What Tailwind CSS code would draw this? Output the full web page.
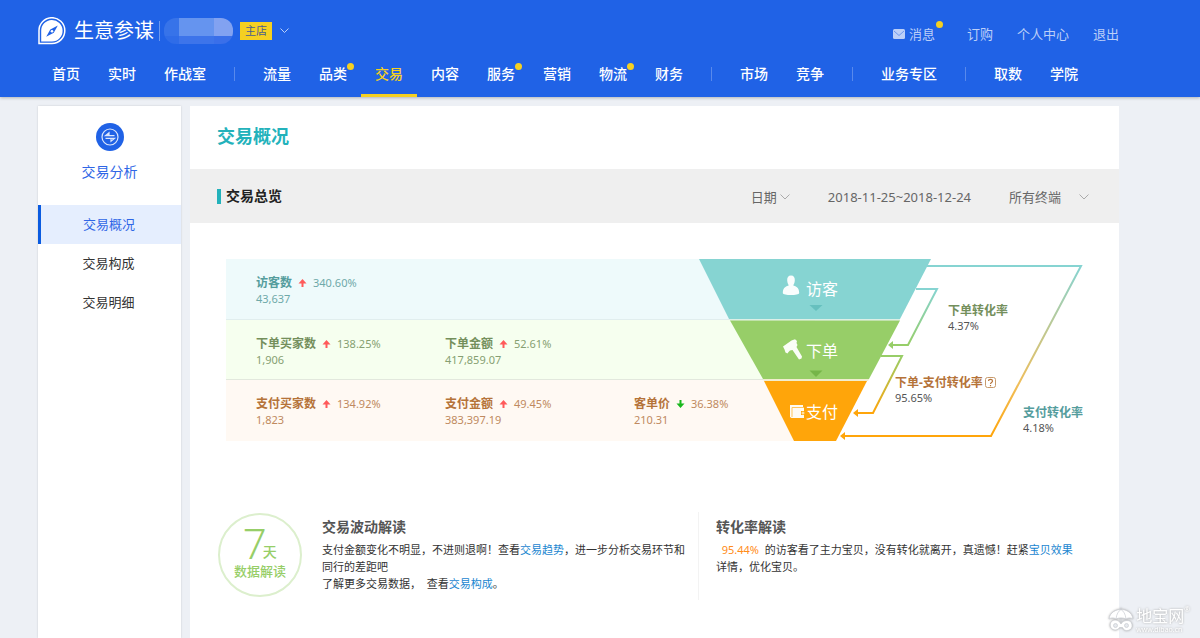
<!DOCTYPE html>
<html lang="zh-CN">
<head>
  <meta charset="UTF-8" />
  <meta name="viewport" content="width=device-width, initial-scale=1.0"/>
  <title>生意参谋 - 交易概况</title>
  <script src="https://cdn.jsdelivr.net/npm/@tailwindcss/browser@4"></script>
  <style>
    body {
      font-family: "Noto Sans", "Noto Sans CJK SC", sans-serif;
    }
  </style>
</head>
<body class="min-h-screen flex flex-col bg-[#edf0f5] text-[#333] relative">

  <!-- header -->
  <header class="bg-[#2062e6] pl-[38px] pr-[81px] shadow-[0_1px_3px_rgba(0,0,0,0.25)]">
    <div class="flex items-center h-[50px] pt-[11px]">
      <svg class="w-7 h-7 shrink-0" viewBox="0 0 28 28">
        <path d="M1 26.500V14A12.900 12.900 0 1 1 14 26.500Z" fill="none" stroke="#fff" stroke-width="1.500"/>
        <path d="M3.200 24.400V14A10.700 10.700 0 1 1 14 24.400Z" fill="#fff"/>
        <path d="M19.800 8.500L15.800 15.800L8.200 19.800L12.300 12.600Z" fill="#2062e6"/>
        <circle cx="14" cy="14.200" r="1.300" fill="#fff"/>
      </svg>
      <span class="ml-2 text-xl text-white leading-none">生意参谋</span>
      <span class="ml-[5px] w-px h-5 bg-white/35"></span>
      <span class="ml-1 w-[69px] h-[26px] rounded-xl overflow-hidden grid grid-cols-[15px_35px_1fr] grid-rows-[18px_1fr]">
        <i class="bg-[#3773e9]"></i><i class="bg-[#6594ef]"></i><i class="bg-[#82a2f1]"></i>
        <i class="bg-[#2f6ce8]"></i><i class="bg-[#3d74ea]"></i><i class="bg-[#3a6fe9]"></i>
      </span>
      <button type="button" class="ml-[7px] flex items-center gap-2">
        <span class="w-8 h-[18px] bg-[#f5d021] text-[#4a5d8c] text-[11px] leading-[18px] text-center">主店</span>
        <svg class="w-[9px] h-[5px]" viewBox="0 0 9 5" fill="none" stroke="#bcd0f8"><path d="M0.500 0.500L4.500 4.500L8.500 0.500"/></svg>
      </button>
      <div class="ml-auto pt-1.5 flex gap-6 text-[13px] leading-5 text-[#bccff8]">
        <a href="#" class="relative flex items-center gap-1 pr-2">
          <svg class="w-3 h-[10px]" viewBox="0 0 12 10"><rect width="12" height="10" rx="1.500" fill="#bccff8"/><path d="M1 2L6 6.500L11 2" fill="none" stroke="#6c97ee"/></svg>
          消息
          <i class="absolute right-0 top-[-3px] w-[7px] h-[7px] rounded-full bg-[#f5d021]"></i>
        </a>
        <a href="#">订购</a>
        <a href="#">个人中心</a>
        <a href="#">退出</a>
      </div>
    </div>

    <nav class="flex items-center h-[47px] text-sm text-white font-medium">
      <a href="#" class="px-3.5">首页</a>
      <a href="#" class="px-3.5">实时</a>
      <a href="#" class="px-3.5">作战室</a>
      <i class="mx-3.5 w-px h-3.5 bg-white/25"></i>
      <a href="#" class="px-3.5">流量</a>
      <a href="#" class="px-3.5 relative">品类<i class="absolute right-[7px] top-[-1px] w-[7px] h-[7px] rounded-full bg-[#f5d021]"></i></a>
      <a href="#" class="px-3.5 h-full flex items-center text-[#f5d021] border-b-3 border-[#f5d021] pt-[3px]">交易</a>
      <a href="#" class="px-3.5">内容</a>
      <a href="#" class="px-3.5 relative">服务<i class="absolute right-[7px] top-[-1px] w-[7px] h-[7px] rounded-full bg-[#f5d021]"></i></a>
      <a href="#" class="px-3.5">营销</a>
      <a href="#" class="px-3.5 relative">物流<i class="absolute right-[7px] top-[-1px] w-[7px] h-[7px] rounded-full bg-[#f5d021]"></i></a>
      <a href="#" class="px-3.5">财务</a>
      <i class="mx-3.5 w-px h-3.5 bg-white/25"></i>
      <a href="#" class="px-3.5">市场</a>
      <a href="#" class="px-3.5">竞争</a>
      <i class="mx-3.5 w-px h-3.5 bg-white/25"></i>
      <a href="#" class="px-3.5">业务专区</a>
      <i class="mx-3.5 w-px h-3.5 bg-white/25"></i>
      <a href="#" class="px-3.5">取数</a>
      <a href="#" class="px-3.5">学院</a>
    </nav>
  </header>

  <div class="flex-1 flex gap-[9px] pt-[9px] pl-[38px] pr-[81px]">

    <!-- sidebar -->
    <aside class="w-[143px] shrink-0 bg-white shadow-[0_0_2px_rgba(0,0,0,0.15)]">
      <div class="h-[99px] pt-[17px] flex flex-col items-center">
        <svg class="w-7 h-7 ml-px" viewBox="0 0 28 28">
          <circle cx="14" cy="14" r="14" fill="#2062e6"/>
          <g fill="none" stroke="#dce7fc" stroke-width="1.200">
            <circle cx="14" cy="14" r="8"/>
            <path d="M18.500 12.600H9.500L13 9.800V12"/>
            <path d="M9.500 15.400H18.500L15 18.200V16"/>
          </g>
        </svg>
        <h2 class="mt-[11px] text-sm leading-5 text-[#2f66e6]">交易分析</h2>
      </div>
      <nav class="text-[13px] leading-[39px] text-center">
        <a href="#" class="block bg-[#e5eefe] text-[#2f66e6] border-l-3 border-[#0a5be0] pr-1">交易概况</a>
        <a href="#" class="block pr-0.5">交易构成</a>
        <a href="#" class="block pr-0.5">交易明细</a>
      </nav>
    </aside>

    <main class="flex-1 min-w-0 bg-white">
      <h1 class="pl-[27px] h-[63px] leading-[60px] text-lg font-bold text-[#23b2bb]">交易概况</h1>

      <div class="h-[54px] bg-[#efefef] pl-[27px] pr-[30px] flex items-center">
        <i class="w-1 h-[15px] bg-[#23b2bb]"></i>
        <h2 class="ml-[5px] text-sm font-bold text-[#222]">交易总览</h2>
        <div class="ml-auto pt-0.5 flex items-center gap-[38px] text-[13px] leading-5 text-[#666]">
          <label class="relative flex items-center">
            <select aria-label="日期" class="appearance-none w-[39px] leading-5"><option>日期</option></select>
            <svg class="absolute right-0 w-[10px] h-[6px] pointer-events-none" viewBox="0 0 10 6" fill="none" stroke="#aaa"><path d="M0.500 0.500L5 5L9.500 0.500"/></svg>
          </label>
          <span>2018-11-25~2018-12-24</span>
          <label class="relative flex items-center">
            <select aria-label="终端" class="appearance-none w-20 leading-5"><option>所有终端</option></select>
            <svg class="absolute right-0 w-[10px] h-[6px] pointer-events-none" viewBox="0 0 10 6" fill="none" stroke="#aaa"><path d="M0.500 0.500L5 5L9.500 0.500"/></svg>
          </label>
        </div>
      </div>

      <!-- funnel -->
      <section class="relative mx-9 mt-9 text-[11px] leading-4">
        <div class="mr-[268px]">
          <div class="h-[61px] pl-[30px] pt-4 flex bg-[#eefafb] border-b border-[#e1eeee] text-[#6fa9a9]">
            <div class="w-[189px]">
              <p class="flex items-center"><b class="text-xs leading-4 text-[#559d9d]">访客数</b>
                <svg class="mx-[6px] w-[9px] h-2" viewBox="0 0 9 8" fill="#ff5a5a"><path d="M4.500 0L8.500 4.500H5.500V8H3.500V4.500H0.500Z"/></svg>340.60%</p>
              <p>43,637</p>
            </div>
          </div>
          <div class="h-[60px] pl-[30px] pt-4 flex bg-[#f6ffef] border-b border-[#e2e8dd] text-[#869f72]">
            <div class="w-[189px]">
              <p class="flex items-center"><b class="text-xs leading-4 text-[#748f5c]">下单买家数</b>
                <svg class="mx-[6px] w-[9px] h-2" viewBox="0 0 9 8" fill="#ff5a5a"><path d="M4.500 0L8.500 4.500H5.500V8H3.500V4.500H0.500Z"/></svg>138.25%</p>
              <p>1,906</p>
            </div>
            <div class="w-[189px]">
              <p class="flex items-center"><b class="text-xs leading-4 text-[#748f5c]">下单金额</b>
                <svg class="mx-[6px] w-[9px] h-2" viewBox="0 0 9 8" fill="#ff5a5a"><path d="M4.500 0L8.500 4.500H5.500V8H3.500V4.500H0.500Z"/></svg>52.61%</p>
              <p>417,859.07</p>
            </div>
          </div>
          <div class="h-[61px] pl-[30px] pt-4 flex bg-[#fff9f3] text-[#c08a60]">
            <div class="w-[189px]">
              <p class="flex items-center"><b class="text-xs leading-4 text-[#b57339]">支付买家数</b>
                <svg class="mx-[6px] w-[9px] h-2" viewBox="0 0 9 8" fill="#ff5a5a"><path d="M4.500 0L8.500 4.500H5.500V8H3.500V4.500H0.500Z"/></svg>134.92%</p>
              <p>1,823</p>
            </div>
            <div class="w-[189px]">
              <p class="flex items-center"><b class="text-xs leading-4 text-[#b57339]">支付金额</b>
                <svg class="mx-[6px] w-[9px] h-2" viewBox="0 0 9 8" fill="#ff5a5a"><path d="M4.500 0L8.500 4.500H5.500V8H3.500V4.500H0.500Z"/></svg>49.45%</p>
              <p>383,397.19</p>
            </div>
            <div>
              <p class="flex items-center"><b class="text-xs leading-4 text-[#b57339]">客单价</b>
                <svg class="mx-[6px] w-[9px] h-2" viewBox="0 0 9 8" fill="#18b81c"><path d="M4.500 8L8.500 3.500H5.500V0H3.500V3.500H0.500Z"/></svg>36.38%</p>
              <p>210.31</p>
            </div>
          </div>
        </div>

        <svg class="absolute right-0 top-0 w-[384px] h-[182px]" viewBox="0 0 384 182">
          <defs>
            <linearGradient id="g1" gradientUnits="userSpaceOnUse" x1="0" y1="7" x2="0" y2="177"><stop offset="0" stop-color="#86d4d2"/><stop offset="0.700" stop-color="#f0be5a"/><stop offset="1" stop-color="#ffa50a"/></linearGradient>
            <linearGradient id="g2" gradientUnits="userSpaceOnUse" x1="0" y1="30" x2="0" y2="86"><stop offset="0" stop-color="#86d4d2"/><stop offset="1" stop-color="#97ce68"/></linearGradient>
            <linearGradient id="g3" gradientUnits="userSpaceOnUse" x1="0" y1="97" x2="0" y2="154"><stop offset="0" stop-color="#97ce68"/><stop offset="1" stop-color="#ffa50a"/></linearGradient>
          </defs>
          <!-- conversion lines -->
          <g fill="none" stroke-width="2">
            <path d="M226 7H382L292 177H145" stroke="url(#g1)"/>
            <path d="M217 30H238L209 86H193" stroke="url(#g2)"/>
            <path d="M182 97H203L174 154H159" stroke="url(#g3)"/>
          </g>
          <path d="M141 177L146 173V181Z" fill="#ffa50a"/>
          <path d="M189 86L194 82V90Z" fill="#97ce68"/>
          <path d="M154 154L159 150V158Z" fill="#ffa50a"/>
          <!-- levels -->
          <path d="M0 0H232L201 60H30Z" fill="#86d4d2"/>
          <path d="M30 60H201L200.500 61.500H31Z" fill="#dcefe6"/>
          <path d="M31 61.500H201L170 120H64Z" fill="#97ce68"/>
          <path d="M64 120H170L169 122H65Z" fill="#f1edcf"/>
          <path d="M65 122H168L137 182H95Z" fill="#ffa50a"/>
          <path d="M110.500 46H123.500L117 52Z" fill="#66c0be"/>
          <path d="M110.500 111.500H123.500L117 118Z" fill="#76b548"/>
          <g fill="#fff" fill-opacity="0.950">
            <!-- visitor -->
            <path d="M92 16.500C94.800 16.500 96 18.600 95.800 21.500C95.600 24 94.800 25.200 94.200 26.200C96 27.400 100.200 27.500 100.200 34C100.200 35.400 96 36 92 36S83.800 35.400 83.800 34C83.800 27.500 88 27.400 89.800 26.200C89.200 25.200 88.400 24 88.200 21.500C88 18.600 89.200 16.500 92 16.500Z"/>
            <!-- gavel -->
            <path d="M84 87.500L92.500 81.500L96 80.200L98 82L97.500 84L98.500 86L97.500 88L103 97.500L102.500 99.500L100 100.500L93.500 91L91 91.500L89.500 93L88.500 94.500L86.500 93.500L85.500 90.500Z"/>
            <!-- wallet -->
            <path d="M91 146H104V148H105V152H102V156H105V159H92.500L91 158Z"/>
            <circle cx="104" cy="154" r="1.500" fill="#ffe3b0"/>
          </g>
          <path d="M93 158V148.500H105" fill="none" stroke="#ffc55c"/>
          <g fill="#fff" class="text-base">
            <text x="107" y="36">访客</text>
            <text x="107" y="98">下单</text>
            <text x="107" y="159">支付</text>
          </g>
          <g class="text-xs font-bold">
            <text x="249" y="56" fill="#748f5c">下单转化率</text>
            <text x="196" y="128" fill="#b57339">下单-支付转化率</text>
            <text x="324" y="158" fill="#559d9d">支付转化率</text>
          </g>
          <g fill="#555">
            <text x="249" y="71">4.37%</text>
            <text x="196" y="143">95.65%</text>
            <text x="324" y="173">4.18%</text>
          </g>
          <rect x="286.500" y="118.500" width="10" height="10" rx="2" fill="none" stroke="#c79a6c"/>
          <path d="M289.500 122C289.500 119.800 293.500 119.800 293.500 122C293.500 123.500 291.500 123.300 291.500 125M291.500 126V127.200" fill="none" stroke="#b57339" stroke-width="1.200"/>
        </svg>
      </section>

      <!-- weekly reading -->
      <section class="mt-[71px] px-7 flex">
        <div class="w-[84px] h-[84px] mt-px shrink-0 rounded-full border-2 border-[#dcefcd] text-[#97ce68] flex flex-col items-center pt-[13px]">
          <p class="flex items-end h-[34px]"><span class="font-[Roboto] font-light text-[42px] leading-[34px]">7</span><span class="text-sm leading-5 font-medium -ml-1">天</span></p>
          <p class="text-[13px] leading-[18px] font-medium">数据解读</p>
        </div>
        <div class="ml-5 w-[377px] h-[88px] shrink-0 pr-3 border-r border-[#f3f3f3] text-[11px] leading-[17px]">
          <h3 class="text-sm leading-[29px] font-bold text-[#555]">交易波动解读</h3>
          <p>支付金额变化不明显，不进则退啊！查看<a href="#" class="text-[#1a86d0]">交易趋势</a>，进一步分析交易环节和<br>同行的差距吧</p>
          <p>了解更多交易数据，&nbsp; 查看<a href="#" class="text-[#1a86d0]">交易构成</a>。</p>
        </div>
        <div class="ml-[17px] flex-1 text-[11px] leading-[17px]">
          <h3 class="text-sm leading-[29px] font-bold text-[#555]">转化率解读</h3>
          <p>&nbsp; <span class="text-[#ff8c1a]">95.44%</span>&nbsp; 的访客看了主力宝贝，没有转化就离开，真遗憾！赶紧<a href="#" class="text-[#1a86d0]">宝贝效果</a><br>详情，优化宝贝。</p>
        </div>
      </section>
    </main>
  </div>

  <!-- watermark -->
  <div class="absolute right-[10px] bottom-1 flex items-center gap-0.5 text-white drop-shadow-[0_0_1px_#aaa]">
    <svg class="w-[26px] h-[26px]" viewBox="0 0 26 26" fill="#fff" stroke="#c9ccd1" stroke-width="0.700">
      <path d="M1 12C2 5 8 2.500 13 2.500S24 5 25 12C23 10.500 20 10.500 18 12C15 10.500 11 10.500 8 12C6 10.500 3 10.500 1 12Z"/>
      <path d="M13 0.500V2.500M8 12C8.500 7 10.500 4 13 2.500C15.500 4 17.500 7 18 12M13 11V16" fill="none"/>
      <path d="M7 13A5 5 0 1 0 11.500 20.500L14.500 20.500A5 5 0 1 0 19 13.500C16 13.500 14 15 13 17C12 15 10 13 7 13Z"/>
      <circle cx="7.500" cy="18.500" r="2" fill="#e6e9ee"/><circle cx="18.500" cy="18.500" r="2" fill="#e6e9ee"/>
    </svg>
    <div>
      <p class="flex text-base leading-5">地宝网<span class="text-[7px] leading-2">®</span></p>
      <p class="text-[7px] leading-2">www.dibao.cn</p>
    </div>
  </div>

</body>
</html>
